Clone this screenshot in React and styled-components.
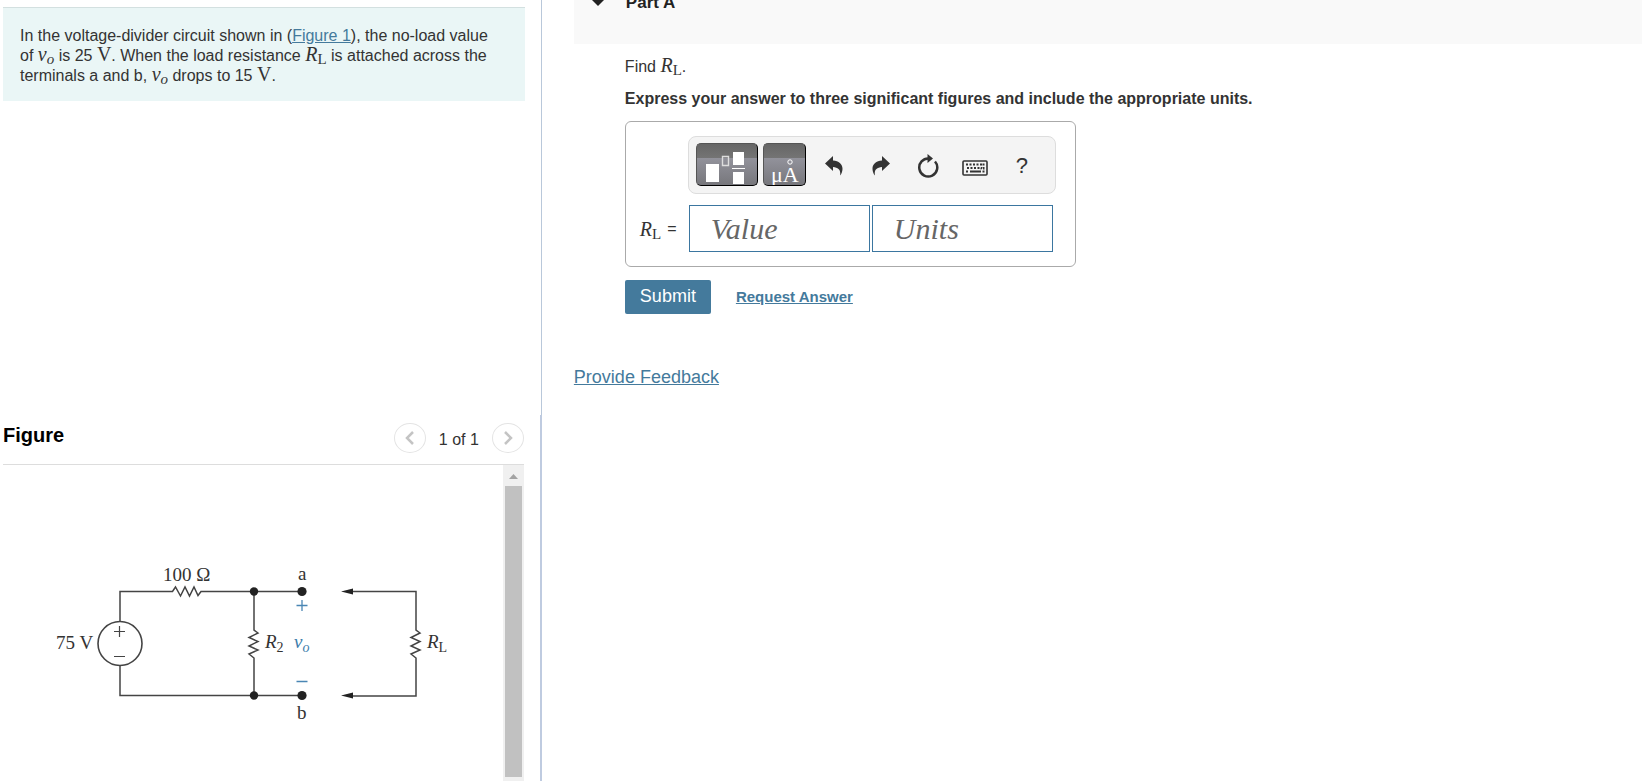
import React from "react";
import styled, { createGlobalStyle } from "styled-components";

const GlobalStyle = createGlobalStyle`
  * {
    box-sizing: border-box;
  }
  body {
    margin: 0;
    background: #fff;
    color: #333;
    font-family: "Liberation Sans", Arial, sans-serif;
    font-size: 16px;
    line-height: 20px;
    overflow: hidden;
  }
`;

const Page = styled.div`
  display: grid;
  grid-template-columns: 33% minmax(0, 1fr);
  height: 100vh;
`;

const LeftPane = styled.div`
  display: grid;
  grid-template-rows: 415px minmax(0, 1fr);
  min-height: 0;
`;

const ProblemArea = styled.section`
  padding: 7px 16px 0 3px;
  border-right: 1px solid #b9c8da;
`;

const Problem = styled.div`
  padding: 18px 24px 15px 17px;
  background: #eaf6f6;
  border-top: 1px solid #d3e0e0;

  p {
    margin: 0;
  }
`;

const Link = styled.a`
  color: #447a9c;
  text-decoration: underline;
  font-size: ${(props) => props.$size || 16}px;
  font-weight: ${(props) => (props.$bold ? "bold" : "normal")};
`;

const MathText = styled.span`
  font-family: "Liberation Serif", "Times New Roman", serif;
  font-size: 20px;
  line-height: 0;

  sub {
    font-size: 15px;
    line-height: 0;
    vertical-align: -3px;
  }
`;

const FigureArea = styled.section`
  display: flex;
  flex-direction: column;
  min-height: 0;
  padding: 8px 16px 0 3px;
  border-right: 2px solid #bfcbe0;
`;

const FigureHeader = styled.div`
  display: flex;
  flex: none;
  align-items: center;
  justify-content: space-between;
  padding-bottom: 11px;
`;

const FigureTitle = styled.h2`
  margin: 0;
  padding-bottom: 6px;
  color: #000;
  font-size: 20px;
  line-height: 24px;
`;

const Pager = styled.div`
  display: flex;
  align-items: center;
  gap: 13px;

  span {
    padding-top: 4px;
  }
`;

const PagerButton = styled.button`
  display: flex;
  align-items: center;
  justify-content: center;
  width: 32px;
  height: 30px;
  padding: 0;
  border: 1px solid #e4e4e4;
  border-radius: 50%;
  background: #fff;
`;

const FigureBody = styled.div`
  display: flex;
  flex: 1;
  min-height: 0;
  border-top: 1px solid #ddd;
`;

const FigureCanvas = styled.div`
  flex: 1;
  min-width: 0;
  overflow: hidden;
  padding: 85px 0 0 47px;
`;

const ScrollTrack = styled.div`
  display: flex;
  flex-direction: column;
  align-items: center;
  width: 21px;
  padding: 9px 0 4px;
  background: #f0f0f0;
`;

const ScrollThumb = styled.div`
  flex: 1;
  width: 17px;
  margin-top: 7px;
  background: #c1c1c1;
`;

const RightPane = styled.main`
  min-width: 0;
  padding-left: 32px;
`;

const PartHeader = styled.div`
  display: flex;
  align-items: center;
  gap: 22px;
  height: 82px;
  margin-top: -38px;
  padding-left: 18px;
  background: #f9f9f9;

  h3 {
    margin: 0;
    color: #222;
    font-size: 17px;
    line-height: 20px;
  }
`;

const PartBody = styled.div`
  padding: 13px 0 0 51px;

  p {
    margin: 0 0 12px;
  }
`;

const AnswerBox = styled.div`
  display: grid;
  grid-template-columns: 49px 368px;
  row-gap: 11px;
  width: fit-content;
  padding: 14px 19px 14px 13px;
  border: 1px solid #aaa;
  border-radius: 6px;
  align-items: center;
`;

const Toolbar = styled.div`
  grid-column: 2;
  display: flex;
  align-items: center;
  height: 58px;
  padding: 0 7px;
  gap: 5px;
  border: 1px solid #ddd;
  border-radius: 8px;
  background: #f4f4f4;
`;

const TemplateButton = styled.button`
  width: ${(props) => props.$width}px;
  height: 43px;
  padding: 0;
  margin-bottom: 2px;
  border: 1px solid #000;
  border-top-color: #555;
  border-left-color: #555;
  border-radius: 5px;
  background: linear-gradient(#666 0, #747474 14px, #92929b 14px, #77777c 100%);

  svg {
    display: block;
  }
`;

const IconRow = styled.div`
  display: flex;
  flex: 1;
  align-items: center;
  justify-content: space-between;
  padding: 2px 10px 0 7px;
`;

const IconButton = styled.button`
  display: flex;
  align-items: center;
  justify-content: center;
  width: 32px;
  height: 32px;
  padding: 0;
  border: 0;
  background: none;
  color: #333;
  font-family: inherit;
  font-size: 22px;
`;

const AnswerLabel = styled.label`
  display: flex;
  gap: 6px;
  padding-left: 1px;
  white-space: nowrap;

  ${MathText} {
    line-height: 20px;
  }
`;

const Fields = styled.div`
  display: flex;
  gap: 2px;
  padding-left: 1px;
`;

const Field = styled.input`
  width: 181px;
  height: 47px;
  padding: 0 21px;
  border: 1px solid #3b76a0;
  border-radius: 0;
  font-family: "Liberation Serif", "Times New Roman", serif;
  font-size: 30px;
  font-style: italic;

  &::placeholder {
    color: #666;
    opacity: 1;
  }
`;

const Actions = styled.div`
  display: flex;
  align-items: center;
  gap: 25px;
  margin-top: 13px;
`;

const SubmitButton = styled.button`
  height: 34px;
  padding: 0 15px 2px;
  border: 0;
  border-radius: 2px;
  background: #447a9c;
  color: #fff;
  font-family: inherit;
  font-size: 18px;
`;

const Feedback = styled.div`
  margin-top: 53px;
`;

const Vo = () => (
  <MathText>
    <i>v</i>
    <sub>
      <i>o</i>
    </sub>
  </MathText>
);

const RL = () => (
  <MathText>
    <i>R</i>
    <sub>L</sub>
  </MathText>
);

function Chevron({ left }) {
  return (
    <svg width="10" height="16" viewBox="0 0 10 16" fill="none" stroke="#c4c4c4" strokeWidth="2.500">
      <path d={left ? "M8 2 2 8l6 6" : "M2 2l6 6-6 6"} />
    </svg>
  );
}

function Circuit() {
  return (
    <svg
      width="400"
      height="180"
      viewBox="50 550 400 180"
      fontFamily="Liberation Serif, serif"
      fontSize="19"
      fill="#333"
      role="img"
      aria-label="Voltage divider circuit"
    >
      <g fill="none" stroke="#444" strokeWidth="1.500">
        <path d="M120 621v-29.500h52.500l3-4.500 5 9 4.500-9 4.500 9 4.500-9 4 8.500 3-4h100.500" />
        <path d="M120 666v29.500h182" />
        <path d="M254 591.500v38.500l4 3-9 4.500 9 4-9 4.500 9 4-9 4 5 4v38" />
        <path d="M350 591.500h66v38.500l4 3-9 4.500 9 4-9 4.500 9 4-9 4 5 4v38h-66" />
        <circle cx="120" cy="643.500" r="22" strokeWidth="1.600" />
        <path d="M114 631.500h11M119.500 626v11M114 656.500h11" strokeWidth="1.200" />
      </g>
      <g fill="#222">
        <circle cx="254" cy="591.500" r="4.200" />
        <circle cx="302" cy="591.500" r="4.600" />
        <circle cx="254" cy="695.500" r="4.200" />
        <circle cx="302" cy="695.500" r="4.600" />
        <path d="M341 591.500l12-3v6zM341 695.500l12-3v6z" />
      </g>
      <path d="M296.500 605.500h11M302 600v11M296.500 681.500h11" stroke="#4a86b4" strokeWidth="1.300" />
      <text x="163" y="581">100 Ω</text>
      <text x="56" y="649">75 V</text>
      <text x="298" y="580">a</text>
      <text x="297" y="719">b</text>
      <text x="265" y="648">
        <tspan fontStyle="italic">R</tspan>
        <tspan fontSize="14" dy="4">2</tspan>
      </text>
      <text x="294" y="648" fill="#3d7dab" fontStyle="italic">
        v<tspan fontSize="14" dy="4">o</tspan>
      </text>
      <text x="427" y="648">
        <tspan fontStyle="italic">R</tspan>
        <tspan fontSize="14" dy="4">L</tspan>
      </text>
    </svg>
  );
}

function TemplatesIcon() {
  return (
    <svg width="60" height="41" viewBox="0 0 60 41">
      <path d="M9 20h13v18H9zM36 8h11v13H36zM36 28h11v12H36zM35 24h13v1H35z" fill="#fff" />
      <path d="M25.500 12.500h6v9h-6z" fill="none" stroke="#ddd" strokeWidth="1.400" />
    </svg>
  );
}

function UnitsIcon() {
  return (
    <svg width="41" height="41" viewBox="0 0 41 41" fontFamily="Liberation Serif, serif" fill="#fff">
      <text x="7" y="38" fontSize="22">
        μA
      </text>
      <circle cx="26" cy="18" r="2.200" fill="none" stroke="#fff" />
    </svg>
  );
}

function UndoIcon({ redo }) {
  return (
    <svg width="18" height="20" viewBox="0 0 18 20" fill="currentColor">
      <path
        transform={redo ? "matrix(-1 0 0 1 18 0)" : undefined}
        d="M0 7.500 8 0v4.500c7 .5 11 5 9 11.500-.5 1.500-1 2.500-2 3.500 1-5-1-8-7-8.500v4z"
      />
    </svg>
  );
}

function ResetIcon() {
  return (
    <svg width="22" height="24" viewBox="0 0 22 24" fill="none">
      <path d="M12 4.500A9 9 0 1 0 18 7.500" stroke="currentColor" strokeWidth="2.500" />
      <path d="M10.500 0l5.500 4.500-5.500 4.500z" fill="currentColor" />
    </svg>
  );
}

function KeyboardIcon() {
  return (
    <svg width="26" height="20" viewBox="0 -4 26 20" fill="none" stroke="currentColor">
      <rect x="1" y="1" width="24" height="14" rx="1" strokeWidth="1.600" />
      <path d="M4 4.500h16M5 8h15M21.500 3.500v5h-3" strokeWidth="2" strokeDasharray="2 1.500" />
      <path d="M4 11.500h2M8 11.500h11M20.500 11.500h2" strokeWidth="1.800" />
    </svg>
  );
}

function App() {
  return (
    <Page>
      <GlobalStyle />
      <LeftPane>
        <ProblemArea>
          <Problem>
            <p>
              In the voltage-divider circuit shown in (<Link href="#figure">Figure 1</Link>), the no-load value of{" "}
              <Vo /> is 25 <MathText>V</MathText>. When the load resistance <RL /> is attached across the terminals a
              and b, <Vo /> drops to 15 <MathText>V</MathText>.
            </p>
          </Problem>
        </ProblemArea>
        <FigureArea id="figure">
          <FigureHeader>
            <FigureTitle>Figure</FigureTitle>
            <Pager>
              <PagerButton aria-label="Previous figure">
                <Chevron left />
              </PagerButton>
              <span>1 of 1</span>
              <PagerButton aria-label="Next figure">
                <Chevron />
              </PagerButton>
            </Pager>
          </FigureHeader>
          <FigureBody>
            <FigureCanvas>
              <Circuit />
            </FigureCanvas>
            <ScrollTrack>
              <svg width="9" height="5" viewBox="0 0 9 5">
                <path d="M0 5 4.500 0 9 5z" fill="#a3a3a3" />
              </svg>
              <ScrollThumb />
            </ScrollTrack>
          </FigureBody>
        </FigureArea>
      </LeftPane>
      <RightPane>
        <PartHeader>
          <svg width="12" height="6" viewBox="0 0 12 6">
            <path d="M0 0h12L6 6z" fill="#222" />
          </svg>
          <h3>Part A</h3>
        </PartHeader>
        <PartBody>
          <p>
            Find <RL />.
          </p>
          <p>
            <b>Express your answer to three significant figures and include the appropriate units.</b>
          </p>
          <AnswerBox>
            <Toolbar>
              <TemplateButton $width={62} aria-label="Templates">
                <TemplatesIcon />
              </TemplateButton>
              <TemplateButton $width={43} aria-label="Symbols">
                <UnitsIcon />
              </TemplateButton>
              <IconRow>
                <IconButton aria-label="Undo">
                  <UndoIcon />
                </IconButton>
                <IconButton aria-label="Redo">
                  <UndoIcon redo />
                </IconButton>
                <IconButton aria-label="Reset">
                  <ResetIcon />
                </IconButton>
                <IconButton aria-label="Keyboard shortcuts">
                  <KeyboardIcon />
                </IconButton>
                <IconButton aria-label="Help">?</IconButton>
              </IconRow>
            </Toolbar>
            <AnswerLabel htmlFor="value">
              <RL /> =
            </AnswerLabel>
            <Fields>
              <Field id="value" placeholder="Value" />
              <Field aria-label="Units" placeholder="Units" />
            </Fields>
          </AnswerBox>
          <Actions>
            <SubmitButton>Submit</SubmitButton>
            <Link href="#answer" $bold $size={15}>
              Request Answer
            </Link>
          </Actions>
        </PartBody>
        <Feedback>
          <Link href="#feedback" $size={18}>
            Provide Feedback
          </Link>
        </Feedback>
      </RightPane>
    </Page>
  );
}

export default App;
